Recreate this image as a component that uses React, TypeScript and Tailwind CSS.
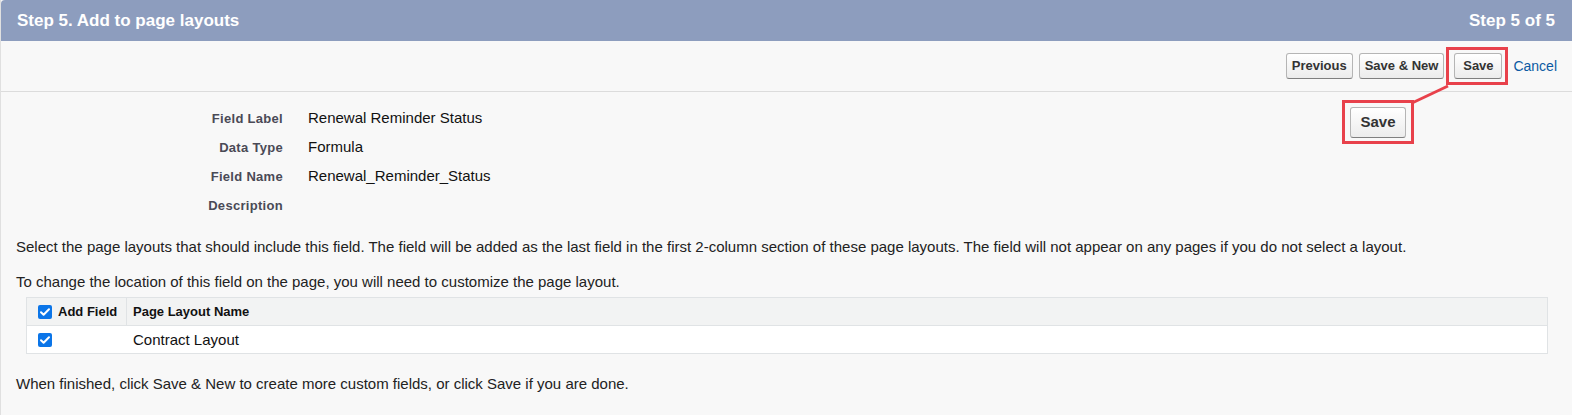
import React from 'react';

const fields: [string, string][] = [
  ['Field Label', 'Renewal Reminder Status'],
  ['Data Type', 'Formula'],
  ['Field Name', 'Renewal_Reminder_Status'],
  ['Description', ''],
];

const CheckBox = (): React.ReactElement => (
  <span className="inline-flex h-[14px] w-[14px] items-center justify-center rounded-[2px] bg-[#0b75e8]">
    <svg viewBox="0 0 14 14" className="h-[14px] w-[14px]" fill="none">
      <path d="M3 7.2l2.6 2.6L11 4.3" stroke="#fff" strokeWidth={2} strokeLinecap="round" strokeLinejoin="round" />
    </svg>
  </span>
);

const Btn = ({ children, big = false }: { children: React.ReactNode; big?: boolean }): React.ReactElement => (
  <button
    className={`rounded-[3px] border border-[#b5b5b5] border-b-[#7f7f7f] bg-gradient-to-b from-white to-[#ececec] font-bold text-[#333] ${
      big ? 'h-[31px] w-[56px] text-[15px]' : 'h-[26px] px-[5px] text-[13px]'
    }`}
  >
    {children}
  </button>
);

export default function App(): React.ReactElement {
  return (
    <div
      className="relative h-[415px] w-[1572px] overflow-hidden border-l border-[#e0e0e0] bg-[#f8f8f8] text-[15px] leading-[18px] text-[#222]"
      style={{ fontFamily: '"Liberation Sans", Arial, sans-serif' }}
    >
      <header className="flex h-[41px] items-center justify-between rounded-tl-[4px] bg-[#8d9dbe] pl-[16px] pr-[17px] text-[17px] font-bold text-white">
        <span>Step 5. Add to page layouts</span>
        <span>Step 5 of 5</span>
      </header>

      <div className="flex h-[51px] items-center justify-end border-b border-[#dcdcdc] pr-[15px]">
        <Btn>Previous</Btn>
        <div className="ml-[6px]">
          <Btn>Save &amp; New</Btn>
        </div>
        <div className="ml-[2px] flex h-[38px] items-center border-[3px] border-[#e8414b] pl-[5px] pr-[3px]">
          <div className="w-[48px]">
            <button className="h-[26px] w-full rounded-[3px] border border-[#b5b5b5] border-b-[#7f7f7f] bg-gradient-to-b from-white to-[#ececec] text-[13px] font-bold text-[#333]">
              Save
            </button>
          </div>
        </div>
        <a className="ml-[5px] text-[14px] text-[#0b5aa3]">Cancel</a>
      </div>

      <div className="grid grid-cols-[282px_1fr] gap-x-[25px] pt-[13px]">
        {fields.map(([label, value]) => (
          <React.Fragment key={label}>
            <div className="h-[29px] pt-[5px] text-right text-[13px] font-bold tracking-[0.3px] text-[#4a4a56]">{label}</div>
            <div className="h-[29px] pt-[4px] text-[15px] text-[#111]">{value}</div>
          </React.Fragment>
        ))}
      </div>

      <p className="mt-[17px] px-[15px]">
        Select the page layouts that should include this field. The field will be added as the last field in the first 2-column section of these page layouts. The field will not appear on any pages if you do not select a layout.
      </p>
      <p className="mt-[17px] px-[15px]">
        To change the location of this field on the page, you will need to customize the page layout.
      </p>

      <div className="ml-[25px] mr-[24px] mt-[6px] border border-[#e0e3e5] bg-white">
        <div className="flex h-[28px] items-center border-b border-[#e0e3e5] bg-[#f2f3f3] text-[13px] font-bold text-[#111]">
          <div className="flex h-full w-[100px] items-center gap-[6px] border-r border-[#e0e3e5] pl-[11px]">
            <CheckBox />
            <span>Add Field</span>
          </div>
          <div className="pl-[6px]">Page Layout Name</div>
        </div>
        <div className="flex h-[27px] items-center text-[15px] text-[#111]">
          <div className="flex w-[100px] items-center pl-[11px]">
            <CheckBox />
          </div>
          <div className="pl-[6px]">Contract Layout</div>
        </div>
      </div>

      <p className="mt-[21px] px-[15px]">
        When finished, click Save &amp; New to create more custom fields, or click Save if you are done.
      </p>

      {/* annotation: zoomed Save with connector */}
      <svg className="pointer-events-none absolute left-0 top-0" width={1572} height={415}>
        <line x1={1447} y1={86} x2={1411} y2={103} stroke="#e8414b" strokeWidth={3} />
      </svg>
      <div className="absolute left-[1341px] top-[100px] flex h-[44px] w-[72px] items-center justify-center border-[3px] border-[#e8414b]">
        <Btn big>Save</Btn>
      </div>
    </div>
  );
}
